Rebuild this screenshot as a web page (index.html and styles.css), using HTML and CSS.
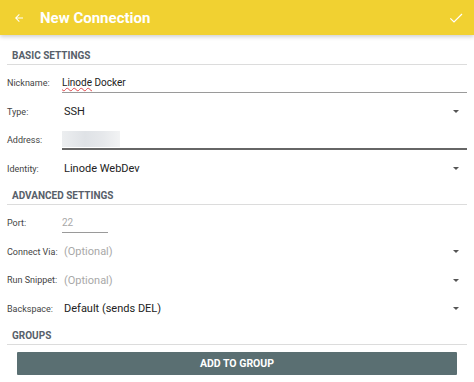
FILE: index.html
```html
<!DOCTYPE html>
<html lang="en">
<head>
    <meta charset="UTF-8">
    <meta name="viewport" content="width=device-width, initial-scale=1.0">
    <title>New Connection</title>
    <link rel="stylesheet" href="styles.css">
</head>
<body>
    <header class="toolbar">
        <span class="back">
            <svg width="12" height="12" viewBox="0 0 24 24"><path d="M20 11H7.8l5.6-5.6L12 4l-8 8 8 8 1.4-1.4L7.8 13H20z" fill="#fff"/></svg>
        </span>
        <h1>New Connection</h1>
        <span class="done">
            <svg width="16" height="16" viewBox="0 0 24 24"><path d="M3.5 12.5l5.5 5.5L21 6" fill="none" stroke="#fff" stroke-width="1.8"/></svg>
        </span>
    </header>

    <div class="container">
        <div class="section">Basic Settings</div>

        <div class="form-row">
            <label>Nickname:</label>
            <div class="field text"><span class="typo">Linode</span>&nbsp;Docker</div>
        </div>
        <div class="form-row">
            <label>Type:</label>
            <div class="field select">SSH</div>
        </div>
        <div class="form-row">
            <label>Address:</label>
            <div class="field text focused"><span class="blur"></span></div>
        </div>
        <div class="form-row">
            <label>Identity:</label>
            <div class="field select">Linode WebDev</div>
        </div>

        <div class="section">Advanced Settings</div>

        <div class="form-row">
            <label>Port:</label>
            <div class="field text short hint">22</div>
        </div>
        <div class="form-row">
            <label>Connect Via:</label>
            <div class="field select hint">(Optional)</div>
        </div>
        <div class="form-row">
            <label>Run Snippet:</label>
            <div class="field select hint">(Optional)</div>
        </div>
        <div class="form-row">
            <label>Backspace:</label>
            <div class="field select">Default (sends DEL)</div>
        </div>

        <div class="section">Groups</div>

        <div class="form-buttons">
            <button type="button">Add to Group</button>
        </div>
    </div>
</body>
</html>
```

FILE: styles.css
```css
body {
    font-family: Roboto, "Noto Sans", sans-serif;
    margin: 0;
    padding: 0;
    background-color: #fff;
    color: #333;
}

.toolbar {
    display: flex;
    align-items: center;
    height: 35px;
    padding: 0 10px 0 13px;
    background: #f1d131;
    color: #fff;
    box-shadow: 0 2px 4px rgba(0, 0, 0, 0.18);
}

.toolbar h1 {
    flex: 1;
    margin: 0 0 0 15px;
    font-size: 15px;
    font-weight: bold;
}

.back, .done {
    display: flex;
    align-items: center;
}

.container {
    padding: 0 7px;
}

.section {
    height: 17px;
    line-height: 17px;
    margin-top: 4px;
    padding-left: 5px;
    border-bottom: 1px solid #dcdcdc;
    font-size: 10px;
    font-weight: bold;
    text-transform: uppercase;
    color: #57606a;
}

.section:first-child {
    margin-top: 12px;
}

.form-row {
    display: flex;
    align-items: center;
    height: 28.5px;
}

.section + .form-row {
    margin-top: 4px;
}

label {
    width: 55px;
    font-size: 9px;
    color: #444;
}

.field {
    flex: 1;
    display: flex;
    align-items: center;
    height: 18px;
    font-size: 11px;
    color: #222;
}

.field.text {
    border-bottom: 1px solid #9a9a9a;
    font-size: 10px;
}

.field.focused {
    border-bottom: 2px solid #666;
}

.field.short {
    flex: none;
    width: 46px;
}

.field.select {
    padding-left: 2px;
    margin-right: 8px;
}

.field.select::after {
    content: "";
    margin-left: auto;
    border-left: 3px solid transparent;
    border-right: 3px solid transparent;
    border-top: 3px solid #555;
}

.hint {
    color: #a8a8a8;
}

.typo {
    text-decoration: underline wavy #e0474c;
    text-decoration-thickness: 1px;
}

.blur {
    width: 58px;
    height: 16px;
    background: linear-gradient(90deg, #eceef0, #dfe2e6 40%, #e6e8eb 70%, #f2f3f4);
}

.form-buttons {
    display: flex;
    padding: 7px 10px 0;
}

button {
    flex: 1;
    height: 23px;
    border: none;
    border-radius: 1px;
    background-color: #5a6f72;
    color: #fff;
    font-family: Roboto, sans-serif;
    font-size: 10.5px;
    font-weight: bold;
    text-transform: uppercase;
}
```
